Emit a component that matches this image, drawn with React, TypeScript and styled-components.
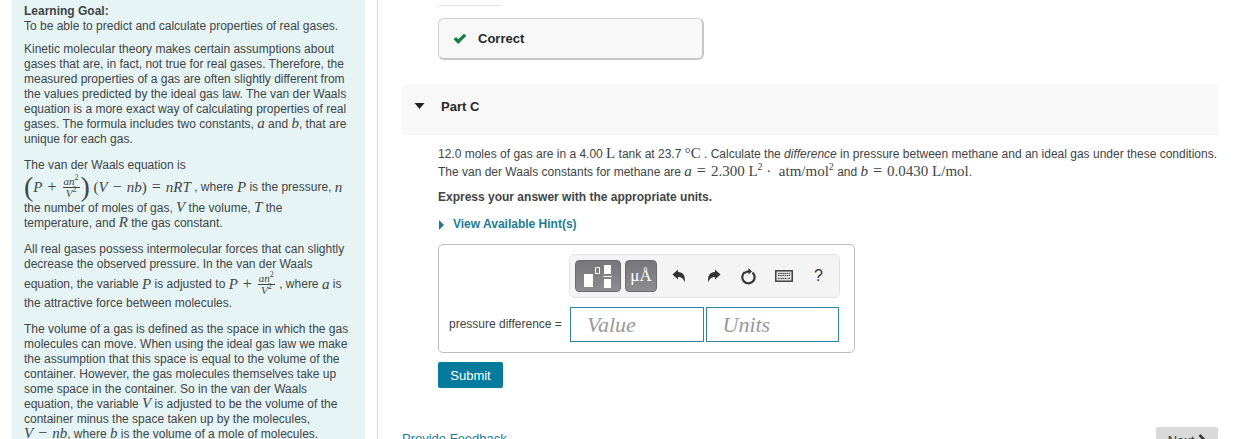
import React from 'react';
import styled, { createGlobalStyle } from 'styled-components';

const sans = '"Liberation Sans", Arial, sans-serif';
const serif = '"Liberation Serif", "Times New Roman", serif';

const GlobalStyle = createGlobalStyle`
  *, *::before, *::after { box-sizing: border-box; }
  body {
    margin: 0;
    background: #fff;
    color: #414447;
    font-family: ${sans};
    font-size: 12px;
    line-height: 15px;
  }
  button, input { font-family: inherit; font-size: inherit; }
`;

const Page = styled.div`
  display: flex;
  height: 100vh;
  overflow: hidden;
`;

const Sidebar = styled.aside`
  flex: 0 0 378px;
  padding: 0 12px;
  border-right: 1px solid #d4d9db;
`;

const Goal = styled.section`
  display: flex;
  flex-direction: column;
  gap: 11px;
  padding: 4px 12px 16px;
  background: #e6f4f5;
  white-space: nowrap;
`;

const GoalText = styled.p`
  margin: 0;
`;

const Intro = styled.div`
  display: flex;
  flex-direction: column;
  gap: 8px;
`;

const FormulaLine = styled.span<{ $height: number }>`
  display: flex;
  align-items: center;
  height: ${({ $height }) => $height}px;
  white-space: pre;
`;

const Var = styled.i`
  font-family: ${serif};
  font-size: 15px;
  line-height: 0;
`;

const Upright = styled.span`
  font-family: ${serif};
  font-size: 15px;
  line-height: 0;
`;

const Operator = styled.span`
  padding: 0 5px;
  font-family: ${serif};
  font-size: 16px;
  line-height: 0;
`;

const BigParen = styled.span`
  font-family: ${serif};
  font-size: 28px;
  line-height: 28px;
`;

const Fraction = styled.span`
  display: inline-flex;
  flex-direction: column;
  align-items: center;
  padding: 0 1px;
  font-family: ${serif};
  font-size: 11px;
  line-height: 11px;
  font-style: italic;
`;

const Numerator = styled.span`
  padding: 0 1px;
  border-bottom: 1px solid currentColor;
`;

const Sup = styled.sup<{ $size: number }>`
  font-size: ${({ $size }) => $size}px;
  font-style: normal;
  line-height: 0;
`;

const Main = styled.main`
  flex: 1;
  min-width: 0;
  padding: 5px 16px 0 24px;
`;

const Indent = styled.div`
  padding-left: 36px;
`;

const PreviousEdge = styled.div`
  width: 64px;
  height: 1px;
  background: #e6e6e6;
`;

const Feedback = styled.div`
  display: flex;
  align-items: center;
  gap: 11px;
  width: 266px;
  height: 42px;
  margin: 12px 0 25px;
  padding: 0 14px;
  border: 1px solid #d2d2d2;
  border-right: 2px solid #c6c6c6;
  border-bottom: 2px solid #c6c6c6;
  border-radius: 6px;
  background: #f8f8f8;
  color: #26282a;
  font-size: 13px;
  font-weight: bold;
`;

const PartHeader = styled.button`
  display: flex;
  align-items: center;
  gap: 16px;
  width: 100%;
  height: 50px;
  padding: 0 12px 8px;
  border: 0;
  background: #f8f8f8;
  color: #26282a;
  font-size: 13px;
  font-weight: bold;
`;

const Question = styled.p`
  margin: 10px 0 9px;
  line-height: 18px;
  white-space: nowrap;
`;

const Instruction = styled.p`
  margin: 0 0 12px;
  font-weight: bold;
`;

const HintLink = styled.a`
  display: flex;
  align-items: center;
  gap: 9px;
  margin-bottom: 12px;
  color: #1c7c98;
  font-weight: bold;
  text-decoration: none;
`;

const AnswerBox = styled.form`
  display: grid;
  grid-template-columns: auto 271px;
  align-items: center;
  justify-content: space-between;
  gap: 9px 6px;
  width: 417px;
  padding: 9px 14px 10px 10px;
  border: 1px solid #bdbdbd;
  border-radius: 5px;
`;

const AnswerLabel = styled.label`
  white-space: nowrap;
`;

const Toolbar = styled.div`
  grid-column: 2;
  display: flex;
  align-items: center;
  gap: 4px;
  height: 44px;
  padding: 0 3px 0 5px;
  border: 1px solid #e2e2e2;
  border-radius: 6px;
  background: #f4f4f4;
`;

const DarkButton = styled.button<{ $width: number }>`
  display: flex;
  align-items: center;
  justify-content: center;
  width: ${({ $width }) => $width}px;
  height: 32px;
  padding: 0;
  border: 1px solid #6c6c70;
  border-radius: 4px;
  background: linear-gradient(#75757a, #8c8c91);
  color: #fff;
  font-family: ${serif};
  font-size: 17px;
`;

const IconButtons = styled.div`
  display: flex;
  flex: 1;
  justify-content: space-around;
`;

const IconButton = styled.button`
  display: flex;
  align-items: center;
  justify-content: center;
  width: 24px;
  height: 31px;
  padding: 0;
  border: 0;
  background: none;
  color: #333;
  font-size: 16px;
`;

const Fields = styled.div`
  display: flex;
  gap: 2px;
  padding: 0 1px;
`;

const Field = styled.input`
  flex: 1;
  min-width: 0;
  height: 35px;
  padding: 0 16px;
  border: 1px solid #2f86a0;
  border-radius: 0;
  font-family: ${serif};
  font-size: 22px;
  font-style: italic;
  &::placeholder { color: #999; opacity: 1; }
`;

const Submit = styled.button`
  display: block;
  width: 65px;
  height: 26px;
  margin: 9px 0 39px;
  padding: 0;
  border: 0;
  border-radius: 2px;
  background: #047a9c;
  color: #fff;
  font-size: 13px;
`;

const Footer = styled.footer`
  display: flex;
  justify-content: space-between;
`;

const FooterLink = styled.a`
  padding-top: 4px;
  color: #1c7c98;
  font-size: 13px;
  text-decoration: none;
`;

const Next = styled.button`
  display: flex;
  align-items: center;
  justify-content: center;
  gap: 4px;
  width: 62px;
  height: 26px;
  padding: 0;
  border: 0;
  border-radius: 2px;
  background: #d9d9d9;
  color: #333;
  font-size: 13px;
`;

const Pressure = () => (
  <Fraction>
    <Numerator>an<Sup $size={8}>2</Sup></Numerator>
    <span>V<Sup $size={8}>2</Sup></span>
  </Fraction>
);

export default function App() {
  return (
    <>
      <GlobalStyle />
      <Page>
        <Sidebar>
          <Goal>
            <Intro>
              <GoalText>
                <b>Learning Goal:</b><br />
                To be able to predict and calculate properties of real gases.
              </GoalText>
              <GoalText>
                Kinetic molecular theory makes certain assumptions about<br />
                gases that are, in fact, not true for real gases. Therefore, the<br />
                measured properties of a gas are often slightly different from<br />
                the values predicted by the ideal gas law. The van der Waals<br />
                equation is a more exact way of calculating properties of real<br />
                gases. The formula includes two constants, <Var>a</Var> and <Var>b</Var>, that are<br />
                unique for each gas.
              </GoalText>
            </Intro>
            <GoalText>
              The van der Waals equation is
              <FormulaLine $height={28}>
                <BigParen>(</BigParen><Var>P</Var><Operator>+</Operator><Pressure /><BigParen>)</BigParen>
                <Upright> (<Var>V</Var></Upright><Operator>−</Operator><Upright><Var>nb</Var>)</Upright>
                <Operator>=</Operator><Var>nRT</Var> , where <Var>P</Var> is the pressure, <Var>n</Var>
              </FormulaLine>
              the number of moles of gas, <Var>V</Var> the volume, <Var>T</Var> the<br />
              temperature, and <Var>R</Var> the gas constant.
            </GoalText>
            <GoalText>
              All real gases possess intermolecular forces that can slightly<br />
              decrease the observed pressure. In the van der Waals
              <FormulaLine $height={24}>
                equation, the variable <Var>P</Var> is adjusted to <Var>P</Var><Operator>+</Operator><Pressure /> , where <Var>a</Var> is
              </FormulaLine>
              the attractive force between molecules.
            </GoalText>
            <GoalText>
              The volume of a gas is defined as the space in which the gas<br />
              molecules can move. When using the ideal gas law we make<br />
              the assumption that this space is equal to the volume of the<br />
              container. However, the gas molecules themselves take up<br />
              some space in the container. So in the van der Waals<br />
              equation, the variable <Var>V</Var> is adjusted to be the volume of the<br />
              container minus the space taken up by the molecules,<br />
              <Var>V</Var><Operator>−</Operator><Var>nb</Var>, where <Var>b</Var> is the volume of a mole of molecules.
            </GoalText>
          </Goal>
        </Sidebar>
        <Main>
          <Indent>
            <PreviousEdge />
            <Feedback>
              <svg width="14" height="12" viewBox="0 0 14 12" aria-hidden="true">
                <path d="M0.6 6.2 3 4 5.2 6.3 11 0.8 13.3 2.8 5.2 11Z" fill="#118040" />
              </svg>
              Correct
            </Feedback>
          </Indent>
          <PartHeader type="button" aria-expanded="true">
            <svg width="11" height="6" viewBox="0 0 11 6" aria-hidden="true">
              <path d="M0.5 0H10.5L5.5 6Z" fill="#222" />
            </svg>
            Part C
          </PartHeader>
          <Indent>
            <Question>
              12.0 moles of gas are in a 4.00 <Upright>L</Upright> tank at 23.7 <Upright>°C</Upright> . Calculate the <i>difference</i> in pressure between methane and an ideal gas under these conditions.<br />
              The van der Waals constants for methane are <Var>a</Var><Operator>=</Operator><Upright>2.300 L<Sup $size={10}>2</Sup> · &nbsp;atm/mol<Sup $size={10}>2</Sup></Upright> and <Var>b</Var><Operator>=</Operator><Upright>0.0430 L/mol</Upright>.
            </Question>
            <Instruction>Express your answer with the appropriate units.</Instruction>
            <HintLink href="#hints">
              <svg width="6" height="10" viewBox="0 0 6 10" aria-hidden="true">
                <path d="M1 0 6 5 1 10Z" fill="currentColor" />
              </svg>
              View Available Hint(s)
            </HintLink>
            <AnswerBox>
              <Toolbar>
                <DarkButton type="button" $width={46} aria-label="Templates">
                  <svg width="30" height="24" viewBox="0 0 30 24" aria-hidden="true">
                    <path d="M1 10h9v13H1zM21 1h7v9h-7zM21 15h7v9h-7zM20 12h9v1h-9z" fill="#fff" />
                    <path d="M12.5 3.5h4v6h-4z" fill="none" stroke="#fff" />
                  </svg>
                </DarkButton>
                <DarkButton type="button" $width={32} aria-label="Units">μÅ</DarkButton>
                <IconButtons>
                  <IconButton type="button" aria-label="Undo">
                    <svg width="14" height="14" viewBox="0 0 14 14" aria-hidden="true">
                      <path d="M0.5 5.500 6 0.500V3C11 3 14 7 12.500 13.500 11.500 9.500 9.500 8 6 8V10.500Z" fill="#333" />
                    </svg>
                  </IconButton>
                  <IconButton type="button" aria-label="Redo">
                    <svg width="14" height="14" viewBox="0 0 14 14" aria-hidden="true">
                      <path d="M13.500 5.500 8 0.500V3C3 3 0 7 1.500 13.500 2.500 9.500 4.500 8 8 8V10.500Z" fill="#333" />
                    </svg>
                  </IconButton>
                  <IconButton type="button" aria-label="Reset">
                    <svg width="17" height="17" viewBox="0 0 17 17" aria-hidden="true">
                      <path d="M12.500 4.500A6.200 6.200 0 1 1 4.800 4.200" fill="none" stroke="#333" strokeWidth="2.200" />
                      <path d="M4 4.500Q6.500 2.200 8.500 2.300V0L12 3.500 8.500 6.500V4.400Q7 4.400 5.500 5.800Z" fill="#333" />
                    </svg>
                  </IconButton>
                  <IconButton type="button" aria-label="Keyboard">
                    <svg width="18" height="12" viewBox="0 0 18 12" aria-hidden="true">
                      <rect x="0.75" y="0.75" width="16.500" height="10.500" fill="#ddd" stroke="#444" strokeWidth="1.500" />
                      <path d="M3 3.500h12M3 5.500h12M3 8.500h1.500M5.500 8.500h7M13.500 8.500H15" fill="none" stroke="#444" strokeDasharray="1.500 0.7" />
                    </svg>
                  </IconButton>
                  <IconButton type="button" aria-label="Help">?</IconButton>
                </IconButtons>
              </Toolbar>
              <AnswerLabel htmlFor="value">pressure difference =</AnswerLabel>
              <Fields>
                <Field id="value" placeholder="Value" />
                <Field aria-label="Units" placeholder="Units" />
              </Fields>
            </AnswerBox>
            <Submit type="button">Submit</Submit>
          </Indent>
          <Footer>
            <FooterLink href="#feedback">Provide Feedback</FooterLink>
            <Next type="button">
              Next
              <svg width="8" height="12" viewBox="0 0 8 12" aria-hidden="true">
                <path d="M1.500 1 6.500 6 1.500 11" fill="none" stroke="#333" strokeWidth="2.500" />
              </svg>
            </Next>
          </Footer>
        </Main>
      </Page>
    </>
  );
}
